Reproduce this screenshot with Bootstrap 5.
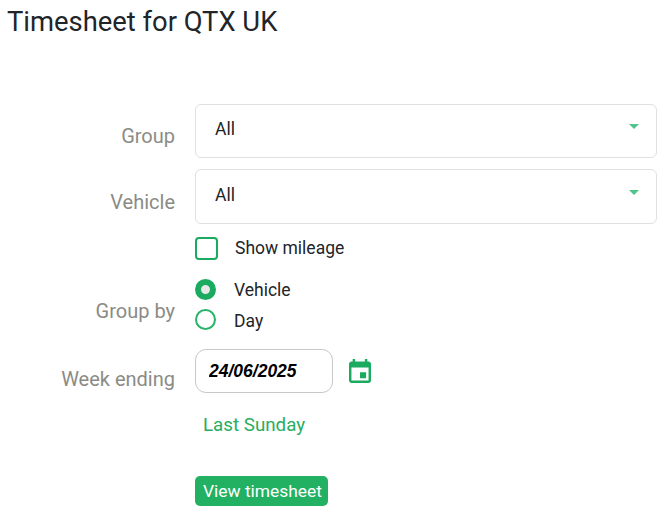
<!DOCTYPE html>
<html lang="en">
<head>
<meta charset="utf-8">
<title>Timesheet for QTX UK</title>
<link rel="stylesheet" href="https://cdn.jsdelivr.net/npm/bootstrap@5.3.0/dist/css/bootstrap.min.css">
<style>
html,body{height:518px;overflow:hidden}
body{font-family:Roboto,"Liberation Sans",sans-serif;color:#212529;background:#fff;font-size:17.500px}
.page-wrap{padding:0 15px 0 7px}
.sheet-title{font-size:27.400px;font-weight:400;line-height:30px;margin:7px 0 0;color:#212529}
.sheet-form{margin-top:67px}
.form-line{display:flex}
.line-label{width:168px;flex:none;text-align:right;color:#8b8b86;font-size:20px;line-height:24px;margin:0}
.label-sel{padding-top:20px}
.label-radio{padding-top:12px}
.label-date{padding-top:16px}
.line-body{margin-left:20px;flex:1;min-width:0}
.pick-select{height:54px;border:1px solid #e0e0e0;border-radius:6px;font-size:17.500px;color:#212529;padding:0 40px 4px 19px;
 background-image:url("data:image/svg+xml,%3Csvg xmlns='http://www.w3.org/2000/svg' width='10' height='5'%3E%3Cpath d='M0 0h10L5 5z' fill='%2350c48a'/%3E%3C/svg%3E");
 background-size:10px 5px;background-position:right 17px top 19px}
.sel-two .pick-select{height:55px;padding-bottom:3px;background-position:right 17px top 20px}
.sel-two .label-sel{padding-top:21px}
.tick-box{appearance:none;width:23px;height:23px;flex:none;border:2px solid #1aaa60;border-radius:4px;margin:0;background:#fff}
.tick-text{margin-left:17px;line-height:23px}
.dot{appearance:none;width:21px;height:21px;flex:none;border:2px solid #27b36a;border-radius:50%;margin:0;background:#fff}
.dot:checked{border:6px solid #1aaa60;background:#e8e8e8}
.dot-text{margin-left:18px;line-height:21px;padding-top:2px}
.dot-low{padding-top:4px;line-height:19px}
.date-box{width:138px;height:44px;border:1px solid #c8c8c8;border-radius:11px;padding:0 13px;font:italic 700 17.500px "Liberation Sans",Arial,sans-serif;color:#000;background:#fff}
.date-icon{margin-left:16px;flex:none}
.sunday-link{color:#27ae60;text-decoration:none;font-size:18.750px;line-height:24px;margin-left:8px;display:inline-block}
.go-btn{background:#22b163;color:#fff;border:0;border-radius:5px;font-size:17.400px;line-height:30px;height:30px;padding:0 6px 0 8px}
.go-btn:hover{background:#1d9c57;color:#fff}
.sel-two{margin-top:11px}
.line-check{margin-top:13px}
.line-radio{margin-top:18px}
.radio-stack{gap:7px}
.line-date{margin-top:18px}
.line-last{margin-top:19px}
.line-go{margin-top:38px}
</style>
</head>
<body>
<div class="page-wrap">
  <h1 class="sheet-title">Timesheet for QTX UK</h1>
  <form class="sheet-form">
    <div class="form-line">
      <label class="line-label label-sel" for="g">Group</label>
      <div class="line-body"><select id="g" class="form-select pick-select"><option>All</option></select></div>
    </div>
    <div class="form-line sel-two">
      <label class="line-label label-sel" for="v">Vehicle</label>
      <div class="line-body"><select id="v" class="form-select pick-select"><option>All</option></select></div>
    </div>
    <div class="form-line line-check">
      <div class="line-label"></div>
      <div class="line-body d-flex align-items-center"><input type="checkbox" class="tick-box" id="m"><label class="tick-text" for="m">Show mileage</label></div>
    </div>
    <div class="form-line line-radio">
      <div class="line-label label-radio align-self-center">Group by</div>
      <div class="line-body d-flex flex-column radio-stack">
        <div class="d-flex align-items-center"><input class="dot" type="radio" name="b" id="b1" checked><label class="dot-text" for="b1">Vehicle</label></div>
        <div class="d-flex align-items-center"><input class="dot" type="radio" name="b" id="b2"><label class="dot-text dot-low" for="b2">Day</label></div>
      </div>
    </div>
    <div class="form-line line-date">
      <label class="line-label label-date align-self-center" for="d">Week ending</label>
      <div class="line-body d-flex align-items-center">
        <input id="d" class="date-box" type="text" value="24/06/2025">
        <svg class="date-icon" width="22" height="24" viewBox="3 1 18 20" preserveAspectRatio="none" aria-hidden="true"><path fill="#1aaa60" d="M17 12h-5v5h5v-5zM16 1v2H8V1H6v2H5c-1.110 0-1.990.9-1.990 2L3 19a2 2 0 0 0 2 2h14c1.100 0 2-.9 2-2V5c0-1.100-.9-2-2-2h-1V1h-2zm3 18H5V8h14v11z"/></svg>
      </div>
    </div>
    <div class="form-line line-last">
      <div class="line-label"></div>
      <div class="line-body"><a href="#" class="sunday-link">Last Sunday</a></div>
    </div>
    <div class="form-line line-go">
      <div class="line-label"></div>
      <div class="line-body"><button type="button" class="btn go-btn">View timesheet</button></div>
    </div>
  </form>
</div>
<script src="https://cdn.jsdelivr.net/npm/bootstrap@5.3.0/dist/js/bootstrap.bundle.min.js"></script>
</body>
</html>
